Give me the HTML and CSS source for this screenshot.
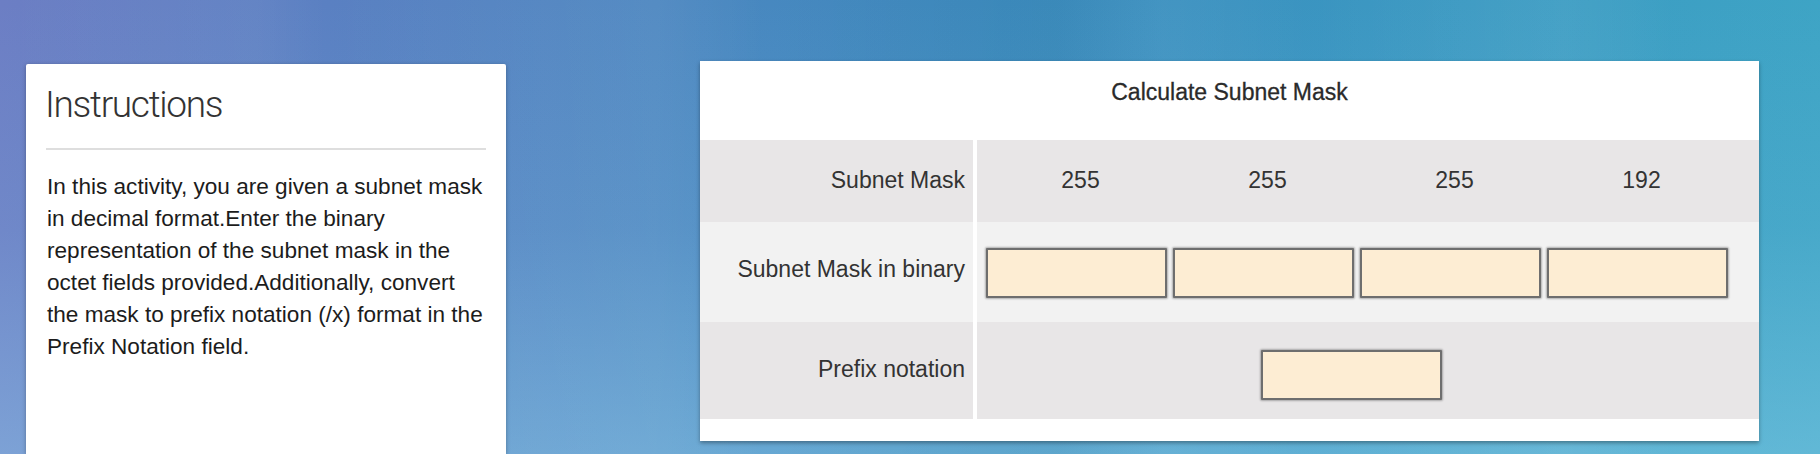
FILE: index.html
```html
<!DOCTYPE html>
<html lang="en">
<head>
<meta charset="utf-8">
<title>Calculate Subnet Mask</title>
<link rel="stylesheet" href="styles.css">
</head>
<body>
<div class="stage">
  <section class="instructions">
    <h1 class="instructions-title">Instructions</h1>
    <hr class="instructions-rule">
    <p class="instructions-text">In this activity, you are given a subnet mask in decimal format.Enter the binary representation of the subnet mask in the octet fields provided.Additionally, convert the mask to prefix notation (/x) format in the Prefix Notation field.</p>
  </section>

  <section class="calc">
    <h2 class="calc-title">Calculate Subnet Mask</h2>
    <div class="calc-grid">
      <div class="label row-dark">Subnet Mask</div>
      <div class="values row-dark">
        <div class="octets">
          <span class="num">255</span>
          <span class="num">255</span>
          <span class="num">255</span>
          <span class="num">192</span>
        </div>
      </div>

      <div class="label label-binary row-light">Subnet Mask in binary</div>
      <div class="values row-light">
        <div class="octets octets-inputs">
          <span class="cell"><input class="field" type="text" aria-label="Octet 1"></span>
          <span class="cell"><input class="field" type="text" aria-label="Octet 2"></span>
          <span class="cell"><input class="field" type="text" aria-label="Octet 3"></span>
          <span class="cell"><input class="field" type="text" aria-label="Octet 4"></span>
        </div>
      </div>

      <div class="label row-dark">Prefix notation</div>
      <div class="values row-dark">
        <div class="octets">
          <span class="prefix"><input class="field" type="text" aria-label="Prefix notation"></span>
        </div>
      </div>
    </div>
  </section>
</div>
</body>
</html>
```

FILE: styles.css
```css
html, body {
  margin: 0;
  padding: 0;
  width: 100%;
  height: 100%;
  overflow: hidden;
}

body {
  font-family: "Liberation Sans", Arial, sans-serif;
  color: #333;
  background:
    linear-gradient(to right,
      rgba(255,255,255,0) 0%,
      rgba(255,255,255,0.04) 14%,
      rgba(255,255,255,0) 18%,
      rgba(255,255,255,0.05) 36%,
      rgba(255,255,255,0) 42%,
      rgba(0,0,0,0.03) 58%,
      rgba(255,255,255,0.04) 64%,
      rgba(255,255,255,0) 72%,
      rgba(255,255,255,0.05) 86%,
      rgba(255,255,255,0) 92%),
    linear-gradient(to bottom,
      rgba(140,205,235,0) 0%,
      rgba(140,205,235,0.12) 50%,
      rgba(150,215,240,0.4) 100%),
    linear-gradient(to right,
      #6c7ec4 0%,
      #5a80c2 18%,
      #4c86c0 36%,
      #3d8cbf 55%,
      #3a96c1 75%,
      #3ea4c5 100%);
}

.stage {
  display: flex;
  align-items: flex-start;
}

/* ---------- Instructions card ---------- */
.instructions {
  box-sizing: border-box;
  width: 480px;
  height: 390px;
  margin: 64px 0 0 26px;
  padding: 17px 20px 0 20px;
  background: #fff;
  border-radius: 2px 2px 0 0;
  box-shadow: 0 1px 4px rgba(0, 0, 0, 0.3);
}

.instructions-title {
  margin: 0 0 0 -1px;
  font-family: Roboto, "Liberation Sans", sans-serif;
  font-weight: 300;
  font-size: 37px;
  line-height: 48px;
  letter-spacing: -1.3px;
  color: #333;
}

.instructions-rule {
  margin: 19px 0 0 0;
  border: 0;
  height: 2px;
  background: #dedede;
}

.instructions-text {
  margin: 21px 0 0 0;
  padding-left: 1px;
  width: 441px;
  font-size: 22.6px;
  line-height: 31.9px;
  color: #1c1c1c;
}

/* ---------- Calculator card ---------- */
.calc {
  box-sizing: border-box;
  width: 1059px;
  height: 380px;
  margin: 61px 0 0 194px;
  padding-bottom: 22px;
  background: #fff;
  box-shadow: 0 2px 4px rgba(0, 0, 0, 0.35);
}

.calc-title {
  box-sizing: border-box;
  height: 79px;
  margin: 0;
  padding-top: 15px;
  text-align: center;
  font-size: 23px;
  line-height: 32px;
  font-weight: 400;
  color: #2a2a2a;
  -webkit-text-stroke: 0.3px #2a2a2a;
}

.calc-grid {
  display: grid;
  grid-template-columns: 273px 782px;
  grid-template-rows: 82px 100px 97px;
  column-gap: 4px;
}

.row-dark { background: #e8e6e7; }
.row-light { background: #f2f2f2; }

.label {
  display: flex;
  align-items: center;
  justify-content: flex-end;
  padding-right: 8px;
  padding-bottom: 2px;
  font-size: 23px;
  color: #333;
}

.label-binary {
  padding-bottom: 6px;
}

.values {
  display: flex;
  align-items: center;
  padding-left: 6px;
}

.octets {
  display: grid;
  grid-template-columns: repeat(4, 187px);
}

.octets-inputs {
  padding-top: 2px;
}

.num {
  text-align: center;
  padding-left: 8px;
  font-size: 23px;
  color: #333;
  padding-bottom: 2px;
}

.cell {
  display: flex;
  justify-content: center;
}

.prefix {
  grid-column: 1 / -1;
  display: flex;
  justify-content: center;
  padding-right: 12px;
  padding-top: 8px;
}

.field {
  box-sizing: border-box;
  width: 181px;
  height: 50px;
  margin: 0;
  padding: 0 6px;
  background: #fdedd3;
  border: 2px solid #6e6e6e;
  border-radius: 1px;
  box-shadow: 0 0 2px 1px rgba(0, 0, 0, 0.28);
  font-family: "Liberation Sans", Arial, sans-serif;
  font-size: 20px;
  outline: none;
}
```
